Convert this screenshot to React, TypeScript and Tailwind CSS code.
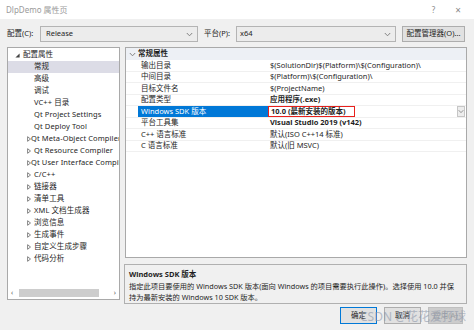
import React from 'react';

const font = "font-['Noto_Sans','Noto_Sans_CJK_SC',sans-serif]";

function Chevron({ className = '' }: { className?: string }) {
  return (
    <svg width="7" height="5" viewBox="0 0 7 5" className={className}>
      <polyline points="0.8,1 3.5,3.8 6.2,1" fill="none" stroke="#777" strokeWidth="0.9" />
    </svg>
  );
}

function Collapsed() {
  return (
    <svg width="4" height="6" viewBox="0 0 4 6">
      <polygon points="0.6,0.7 3.5,3 0.6,5.3" fill="none" stroke="#666" strokeWidth="0.8" />
    </svg>
  );
}

function Expanded() {
  return (
    <svg width="5" height="5" viewBox="0 0 5 5">
      <polygon points="4.6,0.4 4.6,4.6 0.4,4.6" fill="#444" />
    </svg>
  );
}

const treeItems: { t: string; exp?: boolean; sel?: boolean }[] = [
  { t: '常规', sel: true },
  { t: '高级' },
  { t: '调试' },
  { t: 'VC++ 目录' },
  { t: 'Qt Project Settings' },
  { t: 'Qt Deploy Tool' },
  { t: 'Qt Meta-Object Compiler', exp: true },
  { t: 'Qt Resource Compiler', exp: true },
  { t: 'Qt User Interface Compiler', exp: true },
  { t: 'C/C++', exp: true },
  { t: '链接器', exp: true },
  { t: '清单工具', exp: true },
  { t: 'XML 文档生成器', exp: true },
  { t: '浏览信息', exp: true },
  { t: '生成事件', exp: true },
  { t: '自定义生成步骤', exp: true },
  { t: '代码分析', exp: true },
];

const props: { k: string; v: string; bold?: boolean; sel?: boolean }[] = [
  { k: '输出目录', v: '$(SolutionDir)$(Platform)\\$(Configuration)\\' },
  { k: '中间目录', v: '$(Platform)\\$(Configuration)\\' },
  { k: '目标文件名', v: '$(ProjectName)' },
  { k: '配置类型', v: '应用程序(.exe)', bold: true },
  { k: 'Windows SDK 版本', v: '10.0 (最新安装的版本)', bold: true, sel: true },
  { k: '平台工具集', v: 'Visual Studio 2019 (v142)', bold: true },
  { k: 'C++ 语言标准', v: '默认(ISO C++14 标准)' },
  { k: 'C 语言标准', v: '默认(旧 MSVC)' },
];

export default function App() {
  return (
    <div className={`relative w-[474px] h-[330px] overflow-hidden bg-[#f0f0f0] text-[#1e1e1e] ${font} text-[7.5px] leading-none`}>
      {/* title bar */}
      <div className="h-[19px] bg-white flex items-center pl-[6px] pr-[13px]">
        <span className="text-[8px] text-[#9a9a9a]">DlpDemo 属性页</span>
        <span className="ml-auto text-[8px] text-[#8a8a8a]">?</span>
        <span className="ml-[20px] text-[10px] text-[#8a8a8a]">×</span>
      </div>

      {/* config row */}
      <div className="flex items-center h-[16px] mt-[7px] pl-[7px]">
        <span className="w-[33px]">配置(C):</span>
        <div className="w-[158px] h-[16px] border border-[#b4b4b4] bg-[#ececec] flex items-center pl-[5px] pr-[4px]">
          <span>Release</span>
          <Chevron className="ml-auto" />
        </div>
        <span className="ml-[6px] w-[32px]">平台(P):</span>
        <div className="w-[160px] h-[16px] border border-[#b4b4b4] bg-[#ececec] flex items-center pl-[3px] pr-[4px]">
          <span>x64</span>
          <Chevron className="ml-auto" />
        </div>
        <div className="ml-[6px] w-[63px] h-[16px] border border-[#adadad] bg-[#e1e1e1] flex items-center justify-center">
          配置管理器(O)...
        </div>
      </div>

      {/* main */}
      <div className="flex mt-[5px] pl-[7px]">
        {/* tree */}
        <div className="w-[113px] h-[253px] border border-[#a9a9a9] bg-white flex flex-col">
          <div className="flex-1 overflow-hidden pt-[1px]">
            <div className="h-[12px] flex items-center pl-[7px] whitespace-nowrap">
              <Expanded />
              <span className="ml-[3px]">配置属性</span>
            </div>
            {treeItems.map((it) => (
              <div
                key={it.t}
                className={`h-[12px] flex items-center pl-[19px] whitespace-nowrap ${it.sel ? 'bg-[#dcdce6]' : ''}`}
              >
                <span className="w-[7px] flex items-center">{it.exp ? <Collapsed /> : null}</span>
                <span className="tracking-[0.1px]">{it.t}</span>
              </div>
            ))}
          </div>
          <div className="h-[9px] mb-[2px] flex items-center px-[3px] text-[#606060]">
            <span className="w-[8px] text-[7px]">‹</span>
            <div className="w-[80px] h-[8px] bg-[#cdcdcd]" />
            <span className="ml-auto text-[7px]">›</span>
          </div>
        </div>

        {/* right column */}
        <div className="ml-[4px] flex flex-col">
          <div className="ml-[1px] w-[342px] h-[211px] border border-[#a9a9a9] bg-white">
            <div className="h-[12px] flex items-center bg-[#edf0f5]">
              <span className="w-[12px] flex justify-center"><Chevron /></span>
              <span className="font-bold">常规属性</span>
            </div>
            {props.map((p) => (
              <div key={p.k} className="h-[11.5px] flex items-center border-b border-[#f0f0f0]">
                <span className="w-[12px] h-full" />
                <span className={`w-[130px] h-full flex items-center pl-[3px] ${p.sel ? 'bg-[#0078d7] text-white' : ''}`}>{p.k}</span>
                <span className="flex-1 h-full flex items-center">
                  <span className={`h-full flex items-center px-[2px] ${p.bold ? 'font-bold' : ''} ${p.sel ? 'border-[1.5px] border-[#e8201c] pr-[8px]' : ''}`}>{p.v}</span>
                  {p.sel ? (
                    <span className="ml-auto mr-[1px] w-[8px] h-full border border-[#c6c6c6] bg-[#ededed] flex items-center justify-center">
                      <Chevron />
                    </span>
                  ) : null}
                </span>
              </div>
            ))}
          </div>

          <div className="mt-[6px] w-[343px] h-[40px] border border-[#b0b0b0] bg-[#f0f0f0] px-[4px] pt-[4px] text-[7.25px] leading-[11.5px]">
            <div className="font-bold text-[7.5px]">Windows SDK 版本</div>
            <div className="whitespace-nowrap">指定此项目要使用的 Windows SDK 版本(面向 Windows 的项目需要执行此操作)。选择使用 10.0 并保</div>
            <div className="whitespace-nowrap">持为最新安装的 Windows 10 SDK 版本。</div>
          </div>

          <div className="mt-[3px] flex justify-end gap-[7px] pr-[4px]">
            <div className="w-[37px] h-[17px] border-[1.5px] border-[#0078d7] bg-[#e1e1e1] flex items-center justify-center">确定</div>
            <div className="w-[37px] h-[17px] border border-[#adadad] bg-[#e1e1e1] flex items-center justify-center">取消</div>
            <div className="w-[35px] h-[17px] border border-[#bfbfbf] bg-[#cccccc] text-[#a0a0a0] flex items-center justify-center">应用(A)</div>
          </div>
        </div>
      </div>

      {/* watermark */}
      <span className="absolute left-[360px] top-[311px] text-[12px] leading-none text-[#8c96aa] opacity-60 whitespace-nowrap">CSDN @花花爱打球</span>
    </div>
  );
}
